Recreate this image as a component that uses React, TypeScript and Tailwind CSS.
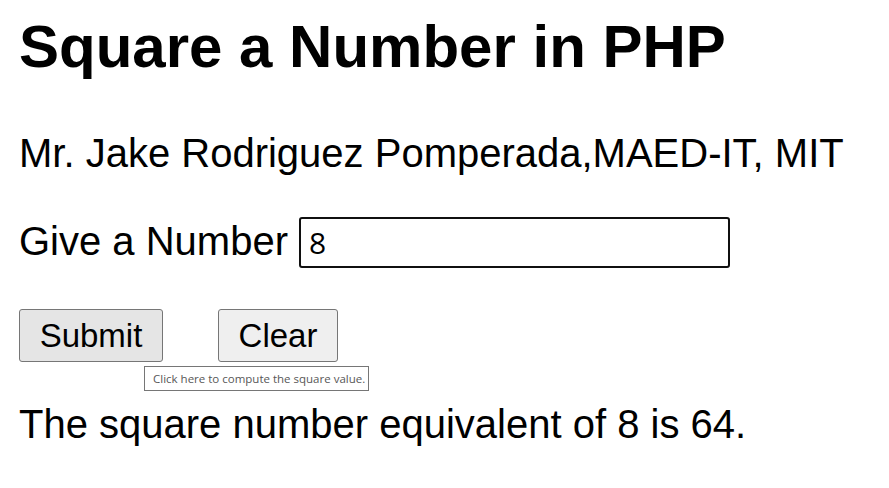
import React, { useState } from 'react';

const App: React.FC = () => {
  const [value, setValue] = useState<string>('8');
  const [result, setResult] = useState<string>('The square number equivalent of 8 is 64.');

  const handleSubmit = () => {
    const n = Number(value);
    setResult(`The square number equivalent of ${value} is ${n * n}.`);
  };

  const handleClear = () => {
    setValue('');
    setResult('');
  };

  return (
    <div className="min-h-screen bg-white text-black px-[19px] font-['Liberation_Sans',Arial,sans-serif]">
      <h1 className="pt-[11px] text-[60px] leading-[72px] font-bold">Square a Number in PHP</h1>

      <p className="mt-[46px] text-[40px] leading-[48px]">Mr. Jake Rodriguez Pomperada,MAED-IT, MIT</p>

      <div className="mt-[40px] flex items-start gap-[11px]">
        <span className="text-[40px] leading-[48px]">Give a Number</span>
        <input
          type="text"
          value={value}
          onChange={(e) => setValue(e.target.value)}
          className="w-[431px] h-[51px] border-2 border-[#101010] rounded-[3px] pl-[8px] text-[30px] font-['Open_Sans',sans-serif] outline-none"
        />
      </div>

      <div className="relative mt-[41px] flex gap-[55px]">
        <button
          onClick={handleSubmit}
          className="w-[144px] h-[53px] bg-[#e5e5e5] border border-[#767676] rounded-[3px] text-[33px] leading-[37px]"
        >
          Submit
        </button>
        <button
          onClick={handleClear}
          className="w-[120px] h-[53px] bg-[#efefef] border border-[#767676] rounded-[3px] text-[33px] leading-[37px]"
        >
          Clear
        </button>
        <div className="absolute left-[125px] top-[57px] w-[225px] h-[25px] bg-white border border-[#767676] flex items-center pl-[8px] whitespace-nowrap text-[11.5px] text-[#575757] font-['Open_Sans',sans-serif]">
          Click here to compute the square value.
        </div>
      </div>

      <p className="mt-[38px] text-[40px] leading-[48px]">{result}</p>
    </div>
  );
};

export default App;
